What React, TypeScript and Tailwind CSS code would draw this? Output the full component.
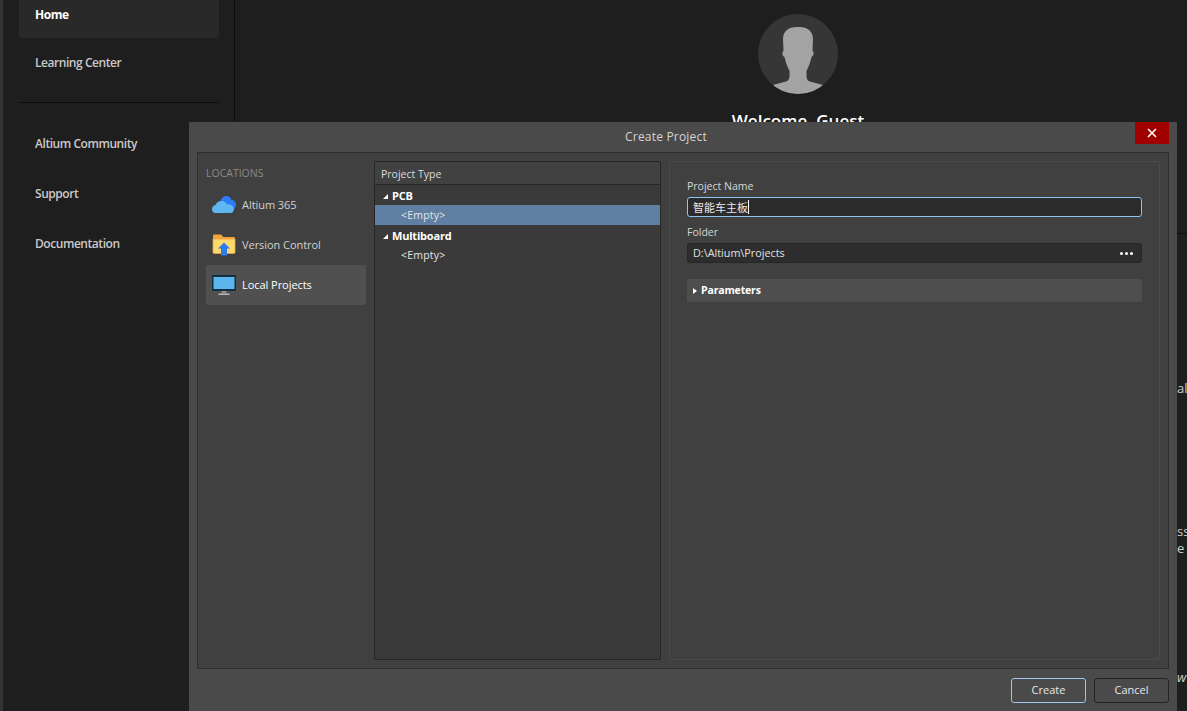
const navFont = "font-['Open_Sans','Noto_Sans',sans-serif]";

function AvatarIcon() {
  return (
    <svg width="80" height="80" viewBox="0 0 80 80">
      <defs>
        <clipPath id="avatar-clip">
          <circle cx="40" cy="40" r="40" />
        </clipPath>
      </defs>
      <circle cx="40" cy="40" r="40" fill="#363636" />
      <path
        clipPath="url(#avatar-clip)"
        d="M15 71 L28 67.500 C30.500 66.500 31.500 65 31.500 62 L31.500 57 C29.500 53 27.500 48 26.500 43 C24.500 42 23.500 39 25.500 36.500 L25 25 C25 17 31 13 38 13 L42 13 C49 13 55 17 55 25 L54.500 36.500 C56.500 39 55.500 42 53.500 43 C52.500 48 50.500 53 48.500 57 L48.500 62 C48.500 65 49.500 66.500 52 67.500 L65 71 L65 80 L15 80 Z"
        fill="#a3a3a3"
      />
    </svg>
  );
}

function CloudIcon() {
  return (
    <svg width="24" height="20" viewBox="0 0 24 20">
      <path d="M8 7 C9 3 12 .5 15 1 C17.500 1.500 19 3 19.500 5 C22.500 5 24 7.500 24 10 C24 12 22.500 14 21 14 L10 14 Z" fill="#2b7cf6" />
      <path d="M3.500 18 C1 18 0 16 0 14 C0 12 1.500 10.500 3.500 10 C4.500 7.500 7 6 9.500 6 C12 6 14 7.500 15 9.500 C18 8.500 21.500 11 22 14 C22 16 20.500 18 18.500 18 Z" fill="#5fb6f0" />
    </svg>
  );
}

function FolderIcon() {
  return (
    <svg width="24" height="22" viewBox="0 0 24 22">
      <path d="M1 2 C1 1 1.500 .5 2.500 .5 L9 .5 L11.500 3 L21.500 3 C22.500 3 23 3.500 23 4.500 L23 6 L1 6 Z" fill="#f2a33c" />
      <path d="M1 5 L23 5 L23 18 C23 19 22.500 19.500 21.500 19.500 L2.500 19.500 C1.500 19.500 1 19 1 18 Z" fill="#fbd96f" stroke="#e8a544" strokeWidth=".8" />
      <path d="M12 8.500 L18 14.500 L15 14.500 L15 21.500 L9 21.500 L9 14.500 L6 14.500 Z" fill="#2f7bf0" />
    </svg>
  );
}

function MonitorIcon() {
  return (
    <svg width="24" height="21" viewBox="0 0 24 21">
      <rect x="0" y="0" width="24" height="16" fill="#10303f" />
      <rect x="1.500" y="2" width="21" height="12" fill="#5cb6ee" />
      <rect x="9.500" y="16" width="5" height="2.500" fill="#8d8d8d" />
      <rect x="6.500" y="18.500" width="11" height="1.500" fill="#b5b5b5" />
    </svg>
  );
}

function Sliver({ text, className }: { text: string; className: string }) {
  return (
    <div className={`w-[10px] overflow-hidden whitespace-nowrap text-[13px] leading-[16px] text-[#cfcfcf] ${className}`}>
      {text}
    </div>
  );
}

function TreeGroup({ name, selected }: { name: string; selected?: boolean }) {
  return (
    <div>
      <div className="flex h-[20px] items-center pl-[8px] pt-[2px] text-[11px] font-bold tracking-[-0.2px] text-white">
        <span className="mr-[4px] h-0 w-0 border-b-[5px] border-l-[5px] border-b-white border-l-transparent" />
        {name}
      </div>
      <div className={`flex h-[20px] items-center pl-[26px] pt-[2px] text-[10.5px] tracking-[0.2px] text-[#e6e6e6] ${selected ? "bg-[#5f80a3]" : ""}`}>
        {"<Empty>"}
      </div>
    </div>
  );
}

function LocationRow({ icon, label, active }: { icon: React.ReactNode; label: string; active?: boolean }) {
  return (
    <div className={`flex h-[40px] items-center rounded-[2px] pl-[6px] text-[11px] ${active ? "bg-[#505050] text-white" : "text-[#d2d2d2]"}`}>
      <div className="flex w-[24px] justify-center">{icon}</div>
      <span className="ml-[6px] tracking-[-0.05px]">{label}</span>
    </div>
  );
}

export default function App() {
  return (
    <div className={`relative flex h-[711px] w-[1187px] overflow-hidden bg-[#1e1e1e] ${navFont}`}>
      {/* left edge */}
      <div className="w-[3px] shrink-0 bg-[#333333]" />

      {/* sidebar */}
      <div className="w-[232px] shrink-0 border-r border-[#0e0e0e] pl-[16px] pr-[15px] text-[12px] font-semibold tracking-[-0.45px] text-[#c9c9c9]">
        <div className="flex h-[38px] items-start rounded-b-[4px] bg-[#292929] pl-[16px] pt-[6px] font-bold text-white">
          <span className="leading-[18px]">Home</span>
        </div>
        <div className="flex h-[50px] items-center pl-[16px]">Learning Center</div>
        <div className="mt-[14px] h-px bg-[#0b0b0b]" />
        <div className="mt-[16px] flex h-[50px] items-center pl-[16px]">Altium Community</div>
        <div className="flex h-[50px] items-center pl-[16px]">Support</div>
        <div className="flex h-[50px] items-center pl-[16px]">Documentation</div>
      </div>

      {/* welcome area behind the dialog */}
      <div className="flex w-[1126px] shrink-0 flex-col items-center pt-[14px]">
        <AvatarIcon />
        <div className="mt-[15px] text-[17px] font-semibold leading-[24px] text-white">Welcome, Guest</div>
      </div>

      {/* home page text that sticks out to the right of the dialog */}
      <div className="absolute left-[1177px] top-0 w-[10px]">
        <div className="mt-[233px] h-px bg-[#0e0e0e]" />
        <Sliver text="al" className="mt-[146px]" />
        <Sliver text="ss" className="mt-[127px]" />
        <Sliver text="e" className="mt-[1px]" />
        <Sliver text="w" className="mt-[113px] italic" />
      </div>

      {/* dialog */}
      <div className="absolute left-[189px] top-[122px] flex h-[589px] w-[988px] flex-col bg-[#4a4a4a] text-[11px]">
        <div className="flex h-[30px] items-start pr-[34px]">
          <div className="flex h-[30px] flex-1 items-center justify-center text-[12px] tracking-[0.2px] text-[#d4d4d4]">
            Create Project
          </div>
          <div className="absolute right-[8px] top-0 flex h-[22px] w-[34px] items-center justify-center bg-[#a00000]">
            <svg width="10" height="10" viewBox="0 0 10 10">
              <path d="M1 1 L9 9 M9 1 L1 9" stroke="white" strokeWidth="1.600" />
            </svg>
          </div>
        </div>

        <div className="mx-[8px] flex h-[517px] border border-[#2e2e2e] bg-[#404040] p-[8px]">
          {/* locations */}
          <div className="w-[160px]">
            <div className="flex h-[24px] items-center pt-[1px] text-[10.500px] text-[#8a8a8a]">LOCATIONS</div>
            <LocationRow icon={<CloudIcon />} label="Altium 365" />
            <LocationRow icon={<FolderIcon />} label="Version Control" />
            <LocationRow icon={<MonitorIcon />} label="Local Projects" active />
          </div>

          {/* project type */}
          <div className="ml-[8px] flex h-[499px] w-[287px] flex-col rounded-[2px] border border-[#252525] bg-[#3a3a3a] text-white">
            <div className="flex h-[23px] items-center border-b border-[#262626] bg-[#414141] pl-[6px] pt-[3px] text-[10.500px] text-[#dcdcdc]">
              Project Type
            </div>
            <TreeGroup name="PCB" selected />
            <TreeGroup name="Multiboard" />
          </div>

          {/* project form */}
          <div className="ml-[8px] h-[499px] w-[491px] rounded-[2px] border border-[#4a4a4a] bg-[#404040] px-[17px] pt-[14px] text-[#d6d6d6]">
            <div className="h-[21px] text-[10.500px] leading-[20px]">Project Name</div>
            <div className="flex h-[20px] items-center rounded-[3px] border border-[#8fc3f2] bg-[#2b2b2b] pl-[5px] font-['Noto_Sans_CJK_SC','Noto_Sans',sans-serif] text-[11px] text-[#e8e8e8]">
              智能车主板
              <span className="h-[14px] w-px bg-white" />
            </div>
            <div className="flex h-[26px] items-end pb-[2px] text-[10.500px]">Folder</div>
            <div className="flex h-[20px] items-center justify-between rounded-[3px] border border-[#262626] bg-[#2d2d2d] pl-[5px] pr-[8px] text-[10.800px] text-[#e0e0e0]">
              D:\Altium\Projects
              <span className="flex gap-[2px]">
                <span className="h-[3px] w-[3px] rounded-full bg-white" />
                <span className="h-[3px] w-[3px] rounded-full bg-white" />
                <span className="h-[3px] w-[3px] rounded-full bg-white" />
              </span>
            </div>
            <div className="mt-[16px] flex h-[23px] items-center bg-[#4e4e4e] pl-[6px] text-[10.500px] font-bold tracking-[-0.15px] text-white">
              <span className="mr-[4px] h-0 w-0 border-y-[3.500px] border-l-[4px] border-y-transparent border-l-white" />
              Parameters
            </div>
          </div>
        </div>

        <div className="flex justify-end gap-[8px] pr-[8px] pt-[9px]">
          <div className="flex h-[25px] w-[75px] items-center justify-center rounded-[3px] border border-[#9cc6ec] bg-[#4a4a4a] text-[#e8e8e8]">
            Create
          </div>
          <div className="flex h-[25px] w-[75px] items-center justify-center rounded-[3px] border border-[#232323] bg-[#4a4a4a] text-[#e8e8e8]">
            Cancel
          </div>
        </div>
      </div>
    </div>
  );
}
